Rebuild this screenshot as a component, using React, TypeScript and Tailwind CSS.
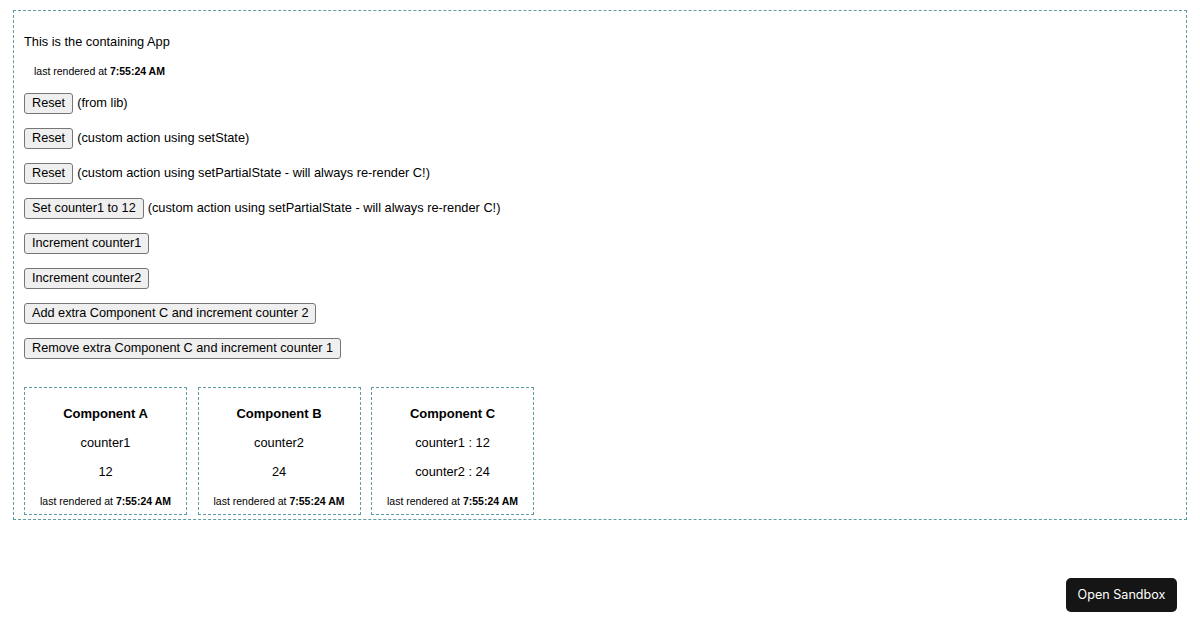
const TIME = '7:55:24 AM'

const LastRendered: React.FC<{ className?: string }> = ({ className }) => (
  <div className={`text-[10.5px] leading-[16px] ${className ?? ''}`}>
    last rendered at <b>{TIME}</b>
  </div>
)

const Btn: React.FC<{ children: React.ReactNode }> = ({ children }) => (
  <button
    type="button"
    className="h-[21px] px-[7px] bg-[#efefef] border border-[#767676] rounded-[3px] text-[12.7px] leading-[15px] text-black"
  >
    {children}
  </button>
)

const rows: { label: string; note?: string }[] = [
  { label: 'Reset', note: '(from lib)' },
  { label: 'Reset', note: '(custom action using setState)' },
  {
    label: 'Reset',
    note: '(custom action using setPartialState - will always re-render C!)',
  },
  {
    label: 'Set counter1 to 12',
    note: '(custom action using setPartialState - will always re-render C!)',
  },
  { label: 'Increment counter1' },
  { label: 'Increment counter2' },
  { label: 'Add extra Component C and increment counter 2' },
  { label: 'Remove extra Component C and increment counter 1' },
]

const Box: React.FC<{ title: string; lines: string[] }> = ({ title, lines }) => (
  <div className="w-[163px] border border-dashed border-[#5f9ea0] pt-[18px] pb-[5px] flex flex-col items-center gap-[13px] text-center">
    <div className="font-bold text-[13px] leading-[16px]">{title}</div>
    {lines.map(line => (
      <div key={line} className="leading-[16px]">
        {line}
      </div>
    ))}
    <LastRendered />
  </div>
)

export default function App() {
  return (
    <div className="relative w-[1200px] h-[630px] bg-white text-black text-[12.8px] font-['Liberation_Sans',Arial,sans-serif]">
      <div className="absolute top-[10px] left-[13px] right-[13px]">
        <div className="border border-dashed border-[#5f9ea0] px-[10px] pt-[23px] pb-[4px]">
          <p className="leading-[16px]">This is the containing App</p>
          <LastRendered className="mt-[13px] pl-[10px]" />
          <div className="mt-[13px] flex flex-col gap-[13px]">
            {rows.map((row, i) => (
              <div key={i} className="h-[22px] flex items-center gap-[4px]">
                <Btn>{row.label}</Btn>
                {row.note && <span className="text-[12.8px]">{row.note}</span>}
              </div>
            ))}
          </div>
          <div className="mt-[28px] flex gap-[10.5px]">
            <Box title="Component A" lines={['counter1', '12']} />
            <Box title="Component B" lines={['counter2', '24']} />
            <Box title="Component C" lines={['counter1 : 12', 'counter2 : 24']} />
          </div>
        </div>
      </div>
      <button
        type="button"
        className="absolute right-[23px] bottom-[18px] w-[111px] h-[34px] rounded-[5px] bg-[#151515] text-white text-[12.6px] font-['Inter',sans-serif]"
      >
        Open Sandbox
      </button>
    </div>
  )
}
